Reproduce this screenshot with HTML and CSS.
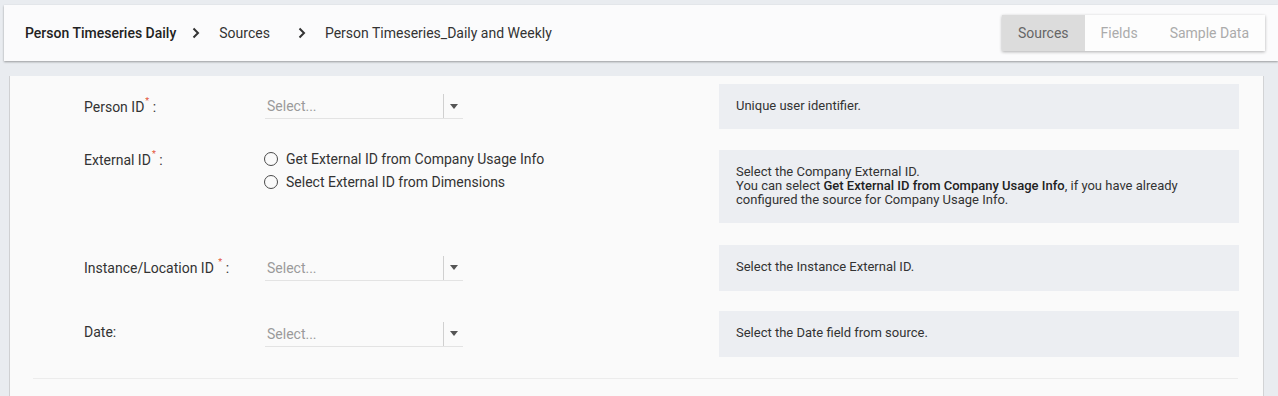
FILE: index.html
```html
<!DOCTYPE html>
<html>
<head>
<meta charset="utf-8">
<link rel="stylesheet" href="styles.css">
</head>
<body>
<header class="topbar">
  <nav class="crumbs">
    <span class="crumb crumb-root">Person Timeseries Daily</span>
    <svg class="chev chev-1" width="8" height="12" viewBox="0 0 8 12"><path d="M1.5 1.5 L6 6 L1.5 10.5" fill="none" stroke="#333" stroke-width="2"/></svg>
    <span class="crumb">Sources</span>
    <svg class="chev chev-2" width="8" height="12" viewBox="0 0 8 12"><path d="M1.5 1.5 L6 6 L1.5 10.5" fill="none" stroke="#333" stroke-width="2"/></svg>
    <span class="crumb">Person Timeseries_Daily and Weekly</span>
  </nav>
  <div class="tabs">
    <div class="tab tab-active">Sources</div>
    <div class="tab">Fields</div>
    <div class="tab">Sample Data</div>
  </div>
</header>

<main class="panel">
  <div class="row">
    <div class="label">Person ID<sup class="req">*</sup> :</div>
    <div class="select"><span class="ph">Select...</span><span class="sep"></span><span class="arrow"></span></div>
    <div class="help">Unique user identifier.</div>
  </div>

  <div class="row row-top">
    <div class="label label-ext">External ID<sup class="req">*</sup> :</div>
    <div class="radios">
      <label class="radio"><span class="circle"></span>Get External ID from Company Usage Info</label>
      <label class="radio"><span class="circle"></span>Select External ID from Dimensions</label>
    </div>
    <div class="help">Select the Company External ID.<br>You can select <b>Get External ID from Company Usage Info</b>, if you have already<br>configured the source for Company Usage Info.</div>
  </div>

  <div class="row row-inst">
    <div class="label">Instance/Location ID <sup class="req">*</sup> :</div>
    <div class="select"><span class="ph">Select...</span><span class="sep"></span><span class="arrow"></span></div>
    <div class="help help-tall">Select the Instance External ID.</div>
  </div>

  <div class="row row-date">
    <div class="label label-date">Date:</div>
    <div class="select"><span class="ph">Select...</span><span class="sep"></span><span class="arrow"></span></div>
    <div class="help help-tall">Select the Date field from source.</div>
  </div>

  <div class="divider"></div>
</main>
</body>
</html>
```

FILE: styles.css
```css
html, body {
  margin: 0;
  padding: 0;
}
body {
  background: #e9ecf0;
  font-family: Roboto, "Liberation Sans", Arial, sans-serif;
  color: #333;
  width: 1278px;
  height: 396px;
  overflow: hidden;
}

.topbar {
  margin: 5px 0 0 4px;
  height: 56px;
  background: #fbfbfc;
  box-shadow: 0 1px 2px rgba(0,0,0,0.35);
  display: flex;
  align-items: center;
  position: relative;
  z-index: 1;
}
.crumbs {
  display: flex;
  align-items: center;
  padding-left: 21px;
  font-size: 14px;
  color: #333;
}
.crumb-root {
  font-weight: 500;
  color: #222;
}
.chev-1 { margin: 0 19px 0 16px; }
.chev-2 { margin: 0 19px 0 28px; }

.tabs {
  margin-left: auto;
  margin-right: 13px;
  display: flex;
  height: 36px;
  background: #fdfdfd;
  box-shadow: 0 1px 3px rgba(0,0,0,0.3);
  font-size: 14px;
}
.tab {
  display: flex;
  align-items: center;
  padding: 0 16px;
  color: #ababab;
}
.tab-active {
  background: #dcdcdc;
  color: #666;
}

.panel {
  margin: 15px 0 0 9px;
  width: 1253px;
  height: 330px;
  background: #fafafa;
  border-left: 1px solid #cfd0d2;
  border-right: 1px solid #d2d3d5;
  padding-top: 8px;
  display: flex;
  flex-direction: column;
  gap: 21px;
}
.row {
  display: grid;
  grid-template-columns: 181px 198px 256px 520px;
  align-items: center;
  padding-left: 74px;
}
.row .help { grid-column: 4; }
.row-top { align-items: start; }
.row-inst { margin-top: 1px; }
.row-date { margin-top: -1px; }

.label {
  font-size: 14px;
  color: #333;
}
.label-ext { margin-top: 2px; }
.label-date { position: relative; top: -2px; }
.req {
  color: #e2563a;
  font-size: 9px;
  vertical-align: top;
  position: relative;
  top: -3px;
  margin-left: 1px;
}

.select {
  height: 24px;
  border-bottom: 1px solid #e3e3e3;
  display: flex;
  align-items: center;
  position: relative;
}
.ph {
  font-size: 14px;
  color: #9a9a9a;
  padding-left: 2px;
  width: 176px;
}
.sep {
  width: 1px;
  align-self: stretch;
  background: #d0d0d0;
}
.arrow {
  margin-left: 6px;
  width: 0;
  height: 0;
  border-left: 4.5px solid transparent;
  border-right: 4.5px solid transparent;
  border-top: 5px solid #555;
}

.radios {
  display: flex;
  flex-direction: column;
  gap: 7px;
  margin-top: 1px;
  margin-left: -1px;
  grid-column: 2 / 4;
}
.radio {
  display: flex;
  align-items: center;
  font-size: 14px;
  color: #333;
  height: 16px;
  white-space: nowrap;
}
.circle {
  width: 12px;
  height: 12px;
  border: 1.6px solid #4a4a4a;
  border-radius: 50%;
  margin-right: 8px;
}

.help {
  background: #eceef2;
  padding: 15px 17px 16px;
  font-size: 13px;
  line-height: 14px;
  color: #333;
}
.help-tall { padding-bottom: 17px; }
.help b { font-weight: 500; color: #222; }

.divider {
  margin: 0 25px 0 23px;
  height: 1px;
  background: #ececec;
}
```
